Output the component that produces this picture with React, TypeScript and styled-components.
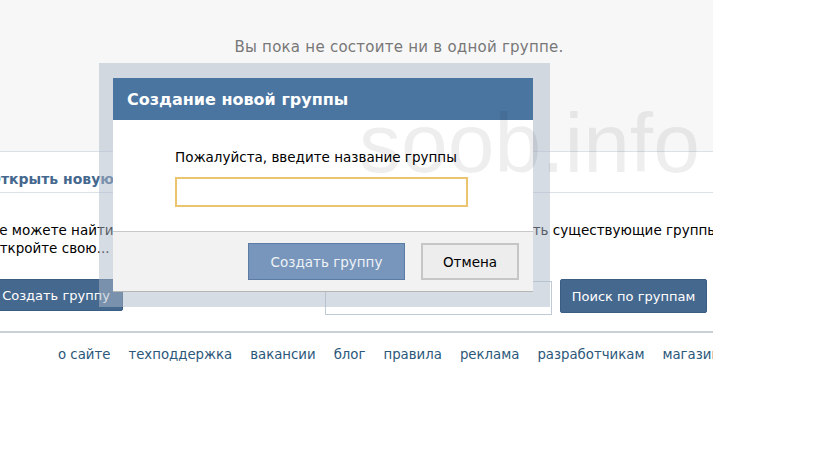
import React from "react";
import styled, { createGlobalStyle } from "styled-components";

const GlobalStyle = createGlobalStyle`
  html, body {
    margin: 0;
    padding: 0;
    background: #ffffff;
  }
  body {
    font-family: "DejaVu Sans", "Liberation Sans", sans-serif;
    font-size: 13px;
    color: #000;
  }
`;

const Stage = styled.div`
  position: relative;
  width: 819px;
  height: 460px;
  overflow: hidden;
  background: #fff;
`;

const Viewport = styled.div`
  width: 713px;
  overflow: hidden;
`;

const EmptyBox = styled.div`
  height: 152px;
  box-sizing: border-box;
  padding: 38px 0 0 85px;
  background: #f7f7f7;
  border-bottom: 1px solid #dae1e8;
  text-align: center;
  font-size: 15px;
  letter-spacing: 0.25px;
  line-height: 18px;
  color: #777;
  white-space: nowrap;
`;

const Column = styled.div`
  margin-left: -11px;
  width: 724px;
`;

const SectionHeader = styled.div`
  padding: 18px 0 4px;
  border-bottom: 1px solid #dae1e8;
  font-weight: bold;
  font-size: 14px;
  line-height: 18px;
  color: #45688e;
  white-space: nowrap;
`;

const Description = styled.div`
  padding-top: 28px;
  font-size: 13.5px;
  line-height: 18px;
  color: #000;
  white-space: nowrap;
`;

const ActionsRow = styled.div`
  display: flex;
  align-items: flex-start;
  margin-top: 22px;
  padding-right: 6px;
`;

const BlueButton = styled.button<{ $width: number; $height: number }>`
  width: ${(p) => p.$width}px;
  height: ${(p) => p.$height}px;
  box-sizing: border-box;
  border: 1px solid #3b5d82;
  border-radius: 2px;
  background: #45688e;
  color: #fff;
  font-family: "DejaVu Sans", "Liberation Sans", sans-serif;
  font-size: 13px;
  padding: 0;
  text-align: center;
`;

const Spacer = styled.div`
  flex: 1;
`;

const SearchInput = styled.input`
  width: 227px;
  height: 34px;
  box-sizing: border-box;
  margin: 2px 8px 0 0;
  border: 1px solid #c0cad5;
  background: #fff;
`;

const FooterLine = styled.div`
  margin-top: 16px;
  height: 2px;
  background: #c9d0d8;
`;

const FooterNav = styled.nav`
  display: flex;
  gap: 18px;
  padding: 13px 0 0 58px;
  white-space: nowrap;
`;

const FooterLink = styled.a`
  font-size: 13.3px;
  line-height: 18px;
  color: #2b587a;
  text-decoration: none;
`;

const Overlay = styled.div`
  position: absolute;
  left: 99px;
  top: 63px;
  width: 451px;
  height: 244px;
  box-sizing: border-box;
  padding: 15px 17px 15px 14px;
  background: rgba(173, 185, 201, 0.5);
`;

const Dialog = styled.div`
  width: 420px;
  height: 214px;
  box-sizing: border-box;
  display: flex;
  flex-direction: column;
  background: #fff;
  border-bottom: 1px solid #b5b5b5;
`;

const DialogHeader = styled.div`
  height: 42px;
  box-sizing: border-box;
  display: flex;
  align-items: center;
  padding-left: 14px;
  background: #4a75a1;
  color: #fff;
  font-weight: bold;
  font-size: 16px;
`;

const DialogBody = styled.div`
  height: 111px;
  box-sizing: border-box;
  padding: 28px 0 0 62px;
`;

const FieldLabel = styled.div`
  font-size: 13.5px;
  line-height: 18px;
  color: #000;
`;

const NameInput = styled.input`
  display: block;
  margin-top: 11px;
  width: 293px;
  height: 30px;
  box-sizing: border-box;
  border: 2px solid #eac46e;
  background: #fff;
`;

const DialogFooter = styled.div`
  flex: 1;
  display: flex;
  justify-content: flex-end;
  align-items: flex-start;
  gap: 16px;
  padding: 11px 14px 0 0;
  background: #f2f2f2;
  border-top: 1px solid #c8c8c8;
`;

const DialogButton = styled.button<{ $primary?: boolean; $width: number }>`
  width: ${(p) => p.$width}px;
  height: 37px;
  box-sizing: border-box;
  padding: 0;
  font-family: "DejaVu Sans", "Liberation Sans", sans-serif;
  font-size: 13.5px;
  border: ${(p) => (p.$primary ? "1px solid #5b7ca5" : "2px solid #c6c6c6")};
  background: ${(p) => (p.$primary ? "#7896bb" : "#ededed")};
  color: ${(p) => (p.$primary ? "#eef2f7" : "#000")};
`;

const Watermark = styled.div`
  position: absolute;
  left: 359px;
  top: 101px;
  font-family: "Liberation Sans", Arial, sans-serif;
  font-size: 84px;
  line-height: 84px;
  color: rgba(0, 0, 0, 0.065);
  pointer-events: none;
  white-space: nowrap;
`;

const links = [
  "о сайте",
  "техподдержка",
  "вакансии",
  "блог",
  "правила",
  "реклама",
  "разработчикам",
  "магазин",
];

export default function App() {
  return (
    <Stage>
      <GlobalStyle />
      <Viewport>
        <EmptyBox>Вы пока не состоите ни в одной группе.</EmptyBox>
        <Column>
          <SectionHeader>Открыть новую группу</SectionHeader>
          <Description>
            Не можете найти подходящую группу? Попробуйте поискать или посмотреть существующие группы
            <br />
            Откройте свою... и пригласите туда своих друзей.
          </Description>
          <ActionsRow>
            <BlueButton $width={134} $height={32}>Создать группу</BlueButton>
            <Spacer />
            <SearchInput />
            <BlueButton $width={147} $height={34}>Поиск по группам</BlueButton>
          </ActionsRow>
        </Column>
        <FooterLine />
        <FooterNav>
          {links.map((l) => (
            <FooterLink key={l} href="#">
              {l}
            </FooterLink>
          ))}
        </FooterNav>
      </Viewport>
      <Overlay>
        <Dialog>
          <DialogHeader>Создание новой группы</DialogHeader>
          <DialogBody>
            <FieldLabel>Пожалуйста, введите название группы</FieldLabel>
            <NameInput />
          </DialogBody>
          <DialogFooter>
            <DialogButton $primary $width={157}>Создать группу</DialogButton>
            <DialogButton $width={98}>Отмена</DialogButton>
          </DialogFooter>
        </Dialog>
      </Overlay>
      <Watermark>soob.info</Watermark>
    </Stage>
  );
}
